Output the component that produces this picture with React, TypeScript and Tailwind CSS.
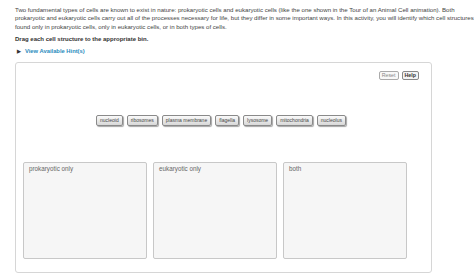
import React from "react";

const chips = [
  "nucleoid",
  "ribosomes",
  "plasma membrane",
  "flagella",
  "lysosome",
  "mitochondria",
  "nucleolus",
];

const bins = ["prokaryotic only", "eukaryotic only", "both"];

export default function App() {
  return (
    <div className="w-[474px] h-[278px] overflow-hidden bg-white pl-[15px] pt-[6px] font-['Liberation_Sans',Arial,sans-serif]">
      <div className="text-[6.1px] leading-[8.4px] text-[#444] whitespace-nowrap">
        <div>
          Two fundamental types of cells are known to exist in nature: prokaryotic cells and eukaryotic cells (like the one shown in the Tour of an Animal Cell animation). Both
        </div>
        <div>
          prokaryotic and eukaryotic cells carry out all of the processes necessary for life, but they differ in some important ways. In this activity, you will identify which cell structures
        </div>
        <div>found only in prokaryotic cells, only in eukaryotic cells, or in both types of cells.</div>
      </div>
      <div className="mt-[3.5px] text-[6px] leading-[8.4px] font-bold text-[#333]">
        Drag each cell structure to the appropriate bin.
      </div>
      <div className="mt-[4px] flex items-center gap-[4px] pl-[2px] text-[5.8px] leading-[8.4px] font-bold text-[#2b8bbd]">
        <span className="text-[5px] text-[#333]">▶</span>
        <span>View Available Hint(s)</span>
      </div>

      <div className="mt-[6.5px] w-[417px] h-[211px] border border-[#d6d6d6] rounded-[3px] flex flex-col pt-[8px] pb-[13px] pl-[7px] pr-[12px]">
        <div className="flex justify-end gap-[3px]">
          <button className="h-[9px] px-[2px] flex items-center text-[5.3px] text-[#888] border border-[#aaa] rounded-[2px] bg-[#f8f8f8]">
            Reset
          </button>
          <button className="h-[9px] px-[2px] flex items-center text-[5.3px] font-bold text-[#333] border border-[#888] rounded-[2px] bg-[#f4f4f4]">
            Help
          </button>
        </div>

        <div className="mt-[35px] flex justify-center gap-[4px]">
          {chips.map((c) => (
            <div
              key={c}
              className="h-[11px] px-[3px] flex items-center text-[5px] text-[#444] rounded-[2px] border border-[#8a8a8a] bg-gradient-to-b from-[#fafafa] to-[#d8d8d8] shadow-[1px_1px_1px_rgba(0,0,0,0.35)]"
            >
              {c}
            </div>
          ))}
        </div>

        <div className="mt-auto flex gap-[6px]">
          {bins.map((b) => (
            <div
              key={b}
              className="w-[124px] h-[97px] border border-[#c8c8c8] rounded-[2px] bg-[#f6f6f6] px-[5px] pt-[1px] text-[6.3px] text-[#666]"
            >
              {b}
            </div>
          ))}
        </div>
      </div>
    </div>
  );
}
